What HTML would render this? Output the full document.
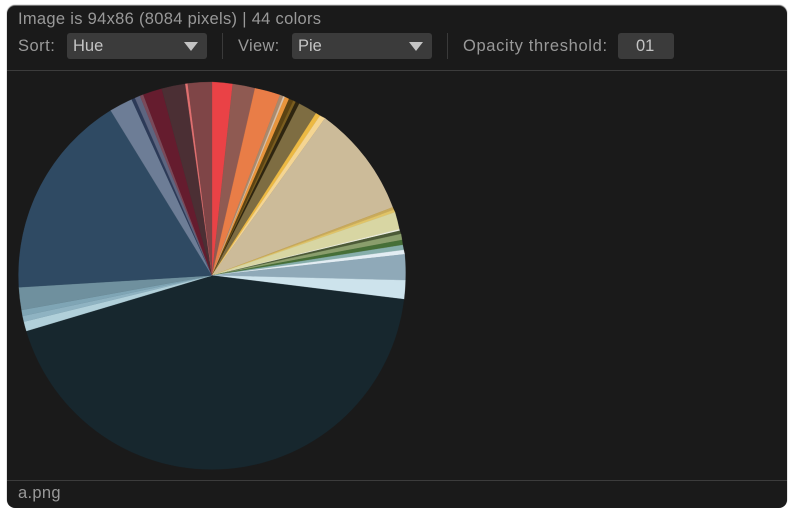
<!DOCTYPE html>
<html>
<head>
<meta charset="utf-8">
<style>
html,body{margin:0;padding:0;background:#fff;}
body{width:794px;height:515px;position:relative;overflow:hidden;font-family:"Liberation Sans",sans-serif;}
#win{position:absolute;left:7px;top:6px;width:780px;height:502px;background:#1a1a1a;border-radius:8px;box-shadow:0 -1px 1px #555;}
.t{position:absolute;font-size:16.5px;line-height:20px;color:#999;white-space:nowrap;}
.sel{position:absolute;top:33px;height:26px;background:#3b3b3b;border-radius:3px;}
.sel span{position:absolute;left:6px;top:3px;font-size:16.5px;line-height:20px;color:#c4c4c4;}
.tri{position:absolute;top:8.5px;width:0;height:0;border-left:7.5px solid transparent;border-right:7.5px solid transparent;border-top:9px solid #c4c4c4;}
.sep{position:absolute;top:33px;width:1px;height:26px;background:#3a3a3a;}
.hr{position:absolute;left:7px;width:780px;height:1px;background:#3c3c3c;}
svg{position:absolute;left:0;top:0;}
</style>
</head>
<body>
<div id="win"></div>
<div class="t" style="left:18px;top:9px;letter-spacing:.3px;">Image is 94x86 (8084 pixels) | 44 colors</div>
<div class="t" style="left:18px;top:36px;letter-spacing:.5px;">Sort:</div>
<div class="sel" style="left:67px;width:140px;"><span>Hue</span><div class="tri" style="left:117px;"></div></div>
<div class="sep" style="left:222px;"></div>
<div class="t" style="left:238px;top:36px;letter-spacing:.3px;">View:</div>
<div class="sel" style="left:292px;width:140px;"><span>Pie</span><div class="tri" style="left:117px;"></div></div>
<div class="sep" style="left:447px;"></div>
<div class="t" style="left:463px;top:36px;letter-spacing:.65px;">Opacity threshold:</div>
<div class="sel" style="left:618px;width:56px;"><span style="left:18px;">01</span></div>
<div class="hr" style="top:70px;"></div>
<div class="hr" style="top:480px;"></div>
<div class="t" style="left:18px;top:483px;letter-spacing:.3px;">a.png</div>
<svg width="794" height="515" viewBox="0 0 794 515">
<g stroke-width=".3">
<path fill="#ea4246" stroke="#ea4246" d="M212 275.5L212 82A193.5 193.5 0 0 1 232.7 84Z"/>
<path fill="#8f5a52" stroke="#8f5a52" d="M212 275.5L232.7 84A193.5 193.5 0 0 1 255 88.3Z"/>
<path fill="#e97d47" stroke="#e97d47" d="M212 275.5L255 88.3A193.5 193.5 0 0 1 280 95Z"/>
<path fill="#a98a6e" stroke="#a98a6e" d="M212 275.5L280 95A193.5 193.5 0 0 1 283.3 96.3Z"/>
<path fill="#d9c0a8" stroke="#d9c0a8" d="M212 275.5L283.3 96.3A193.5 193.5 0 0 1 285 97Z"/>
<path fill="#e8953c" stroke="#e8953c" d="M212 275.5L285 97A193.5 193.5 0 0 1 289 99Z"/>
<path fill="#5b4313" stroke="#5b4313" d="M212 275.5L289 99A193.5 193.5 0 0 1 293.3 100.7Z"/>
<path fill="#7a5d1f" stroke="#7a5d1f" d="M212 275.5L293.3 100.7A193.5 193.5 0 0 1 295.7 102Z"/>
<path fill="#2e2510" stroke="#2e2510" d="M212 275.5L295.7 102A193.5 193.5 0 0 1 299.3 103.7Z"/>
<path fill="#7e6d42" stroke="#7e6d42" d="M212 275.5L299.3 103.7A193.5 193.5 0 0 1 316 113.3Z"/>
<path fill="#ecb943" stroke="#ecb943" d="M212 275.5L316 113.3A193.5 193.5 0 0 1 320 115.7Z"/>
<path fill="#f4d592" stroke="#f4d592" d="M212 275.5L320 115.7A193.5 193.5 0 0 1 325 118.3Z"/>
<path fill="#ccbb99" stroke="#ccbb99" d="M212 275.5L325 118.3A193.5 193.5 0 0 1 392.7 207.3Z"/>
<path fill="#c9aa5a" stroke="#c9aa5a" d="M212 275.5L392.7 207.3A193.5 193.5 0 0 1 393.8 209.8Z"/>
<path fill="#e0c468" stroke="#e0c468" d="M212 275.5L393.8 209.8A193.5 193.5 0 0 1 395 212.3Z"/>
<path fill="#d8d6a3" stroke="#d8d6a3" d="M212 275.5L395 212.3A193.5 193.5 0 0 1 399.3 229.3Z"/>
<path fill="#f2f2e4" stroke="#f2f2e4" d="M212 275.5L399.3 229.3A193.5 193.5 0 0 1 399.7 230.7Z"/>
<path fill="#4c5a37" stroke="#4c5a37" d="M212 275.5L399.7 230.7A193.5 193.5 0 0 1 401 234Z"/>
<path fill="#8a9e6c" stroke="#8a9e6c" d="M212 275.5L401 234A193.5 193.5 0 0 1 402 240Z"/>
<path fill="#466f37" stroke="#466f37" d="M212 275.5L402 240A193.5 193.5 0 0 1 402.7 245Z"/>
<path fill="#86aeab" stroke="#86aeab" d="M212 275.5L402.7 245A193.5 193.5 0 0 1 403.7 250Z"/>
<path fill="#e3edf3" stroke="#e3edf3" d="M212 275.5L403.7 250A193.5 193.5 0 0 1 404.7 254.3Z"/>
<path fill="#8fa9b8" stroke="#8fa9b8" d="M212 275.5L404.7 254.3A193.5 193.5 0 0 1 405.4 280.3Z"/>
<path fill="#cde3ec" stroke="#cde3ec" d="M212 275.5L405.4 280.3A193.5 193.5 0 0 1 404 299.3Z"/>
<path fill="#17272e" stroke="#17272e" d="M212 275.5L404 299.3A193.5 193.5 0 0 1 26.4 331Z"/>
<path fill="#b1d0da" stroke="#b1d0da" d="M212 275.5L26.4 331A193.5 193.5 0 0 1 23.9 321.7Z"/>
<path fill="#8fb3c2" stroke="#8fb3c2" d="M212 275.5L23.9 321.7A193.5 193.5 0 0 1 22.6 316Z"/>
<path fill="#7fa5b5" stroke="#7fa5b5" d="M212 275.5L22.6 316A193.5 193.5 0 0 1 21.6 310Z"/>
<path fill="#6f909e" stroke="#6f909e" d="M212 275.5L21.6 310A193.5 193.5 0 0 1 18.9 287.3Z"/>
<path fill="#2f4a63" stroke="#2f4a63" d="M212 275.5L18.9 287.3A193.5 193.5 0 0 1 110.7 110.5Z"/>
<path fill="#6d7d96" stroke="#6d7d96" d="M212 275.5L110.7 110.5A193.5 193.5 0 0 1 131.7 99.5Z"/>
<path fill="#2c3a58" stroke="#2c3a58" d="M212 275.5L131.7 99.5A193.5 193.5 0 0 1 135 98.1Z"/>
<path fill="#5d6580" stroke="#5d6580" d="M212 275.5L135 98.1A193.5 193.5 0 0 1 140 95.9Z"/>
<path fill="#7a4a5a" stroke="#7a4a5a" d="M212 275.5L140 95.9A193.5 193.5 0 0 1 143.3 94.6Z"/>
<path fill="#651c2e" stroke="#651c2e" d="M212 275.5L143.3 94.6A193.5 193.5 0 0 1 161.7 88.7Z"/>
<path fill="#4b2f34" stroke="#4b2f34" d="M212 275.5L161.7 88.7A193.5 193.5 0 0 1 185.3 83.9Z"/>
<path fill="#e07070" stroke="#e07070" d="M212 275.5L185.3 83.9A193.5 193.5 0 0 1 187.7 83.5Z"/>
<path fill="#7f4547" stroke="#7f4547" d="M212 275.5L187.7 83.5A193.5 193.5 0 0 1 212 82Z"/>
</g>
</svg>
</body>
</html>
